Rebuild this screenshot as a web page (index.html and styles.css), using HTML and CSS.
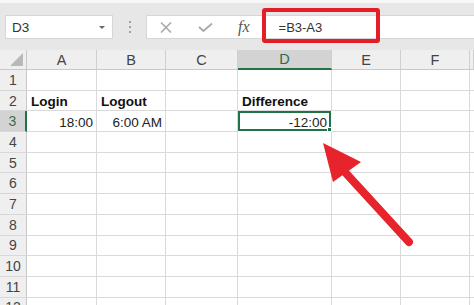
FILE: index.html
```html
<!DOCTYPE html>
<html lang="en">
<head>
    <meta charset="UTF-8">
    <meta name="viewport" content="width=device-width, initial-scale=1.0">
    <title>Time difference</title>
    <link rel="stylesheet" href="styles.css">
</head>
<body>
    <div class="app">
        <div class="toolbar">
            <div class="namebox">
                <span>D3</span>
                <span class="caret"></span>
            </div>
            <div class="grip"><i></i><i></i><i></i></div>
            <div class="fbar">
                <svg class="ico-x" width="14" height="11" viewBox="0 0 14 11"><path d="M2 0.5 L12 10.5 M12 0.5 L2 10.5" stroke="#a9a9a9" stroke-width="1.6" fill="none"/></svg>
                <svg class="ico-ok" width="15" height="9" viewBox="0 0 15 9"><path d="M1 4 L5.5 8 L14 0.5" stroke="#a9a9a9" stroke-width="1.8" fill="none"/></svg>
                <span class="fx">fx</span>
                <span class="formula">=B3-A3</span>
            </div>
        </div>

        <div class="sheet">
            <div class="row head">
                <div class="rh corner"><span class="tri"></span></div>
                <div class="c a">A</div><div class="c b">B</div><div class="c cc">C</div>
                <div class="c d on">D</div><div class="c e">E</div><div class="c f">F</div><div class="c g"></div>
            </div>
            <div class="row">
                <div class="rh">1</div>
                <div class="c a"></div><div class="c b"></div><div class="c cc"></div>
                <div class="c d"></div><div class="c e"></div><div class="c f"></div><div class="c g"></div>
            </div>
            <div class="row">
                <div class="rh">2</div>
                <div class="c a bold">Login</div><div class="c b bold">Logout</div><div class="c cc"></div>
                <div class="c d bold">Difference</div><div class="c e"></div><div class="c f"></div><div class="c g"></div>
            </div>
            <div class="row">
                <div class="rh on">3</div>
                <div class="c a num">18:00</div><div class="c b num">6:00 AM</div><div class="c cc"></div>
                <div class="c d num sel">-12:00</div><div class="c e"></div><div class="c f"></div><div class="c g"></div>
            </div>
            <div class="row">
                <div class="rh">4</div>
                <div class="c a"></div><div class="c b"></div><div class="c cc"></div>
                <div class="c d"></div><div class="c e"></div><div class="c f"></div><div class="c g"></div>
            </div>
            <div class="row">
                <div class="rh">5</div>
                <div class="c a"></div><div class="c b"></div><div class="c cc"></div>
                <div class="c d"></div><div class="c e"></div><div class="c f"></div><div class="c g"></div>
            </div>
            <div class="row">
                <div class="rh">6</div>
                <div class="c a"></div><div class="c b"></div><div class="c cc"></div>
                <div class="c d"></div><div class="c e"></div><div class="c f"></div><div class="c g"></div>
            </div>
            <div class="row">
                <div class="rh">7</div>
                <div class="c a"></div><div class="c b"></div><div class="c cc"></div>
                <div class="c d"></div><div class="c e"></div><div class="c f"></div><div class="c g"></div>
            </div>
            <div class="row">
                <div class="rh">8</div>
                <div class="c a"></div><div class="c b"></div><div class="c cc"></div>
                <div class="c d"></div><div class="c e"></div><div class="c f"></div><div class="c g"></div>
            </div>
            <div class="row">
                <div class="rh">9</div>
                <div class="c a"></div><div class="c b"></div><div class="c cc"></div>
                <div class="c d"></div><div class="c e"></div><div class="c f"></div><div class="c g"></div>
            </div>
            <div class="row">
                <div class="rh">10</div>
                <div class="c a"></div><div class="c b"></div><div class="c cc"></div>
                <div class="c d"></div><div class="c e"></div><div class="c f"></div><div class="c g"></div>
            </div>
            <div class="row">
                <div class="rh">11</div>
                <div class="c a"></div><div class="c b"></div><div class="c cc"></div>
                <div class="c d"></div><div class="c e"></div><div class="c f"></div><div class="c g"></div>
            </div>
            <div class="row">
                <div class="rh">12</div>
                <div class="c a"></div><div class="c b"></div><div class="c cc"></div>
                <div class="c d"></div><div class="c e"></div><div class="c f"></div><div class="c g"></div>
            </div>
        </div>

        <!-- annotations -->
        <div class="highlight"></div>
        <svg class="arrow" width="474" height="305" viewBox="0 0 474 305">
            <line x1="409" y1="242" x2="343" y2="170" stroke="#e7232b" stroke-width="8" stroke-linecap="round"/>
            <polygon points="323,143 333,182 361,162" fill="#e7232b"/>
        </svg>
    </div>
</body>
</html>
```

FILE: styles.css
```css
body {
    margin: 0;
    background-color: #fff;
    font-family: "Liberation Sans", Arial, sans-serif;
    color: #222;
}
.app {
    position: relative;
    width: 474px;
    height: 305px;
    overflow: hidden;
}

/* formula bar */
.toolbar {
    display: flex;
    height: 50px;
    box-sizing: border-box;
    padding-top: 15px;
    background-color: #e7e7e7;
    border-top: 3px solid #f7f7f7;
    padding-top: 12px;
}
.namebox {
    display: flex;
    align-items: center;
    justify-content: space-between;
    width: 108px;
    height: 24px;
    margin-left: 5px;
    padding: 0 7px 0 6px;
    box-sizing: border-box;
    background-color: #fff;
    border: 1px solid #d6d6d6;
    font-size: 13.5px;
    color: #333;
}
.caret {
    width: 0;
    height: 0;
    border-left: 3px solid transparent;
    border-right: 3px solid transparent;
    border-top: 3px solid #666;
}
.grip {
    display: flex;
    flex-direction: column;
    align-items: center;
    justify-content: center;
    gap: 3px;
    width: 33px;
    height: 24px;
}
.grip i {
    width: 2px;
    height: 2px;
    background-color: #a0a0a0;
}
.fbar {
    display: flex;
    align-items: center;
    flex: 1;
    height: 24px;
    box-sizing: border-box;
    padding-left: 12px;
    background-color: #fff;
    border: 1px solid #d6d6d6;
    border-right: none;
}
.ico-ok {
    margin-left: 25px;
}
.fx {
    margin-left: 25px;
    font-family: "Liberation Serif", serif;
    font-style: italic;
    font-size: 16px;
    color: #555;
}
.formula {
    margin-left: 29px;
    font-size: 13px;
    color: #333;
}

/* grid */
.row {
    display: flex;
    height: 20.7px;
}
.row.head {
    height: 20px;
    background-color: #efefef;
}
.rh {
    width: 27px;
    flex: none;
    box-sizing: border-box;
    display: flex;
    align-items: center;
    justify-content: center;
    background-color: #efefef;
    border-right: 1px solid #c8c8c8;
    border-bottom: 1px solid #d8d8d8;
    font-size: 14px;
    color: #444;
}
.rh.on {
    background-color: #d3d3d3;
    color: #3b6e4f;
    border-right: 2px solid #217346;
}
.corner {
    position: relative;
    border-bottom: 1px solid #c8c8c8;
}
.tri {
    position: absolute;
    right: 3px;
    bottom: 3px;
    width: 0;
    height: 0;
    border-left: 13px solid transparent;
    border-bottom: 13px solid #b8b8b8;
}
.c {
    flex: none;
    box-sizing: border-box;
    display: flex;
    align-items: flex-end;
    padding: 0 3px 0 4px;
    border-right: 1px solid #dadada;
    border-bottom: 1px solid #dadada;
    font-size: 13.5px;
    line-height: 16px;
    white-space: nowrap;
    overflow: hidden;
}
.head .c {
    align-items: center;
    justify-content: center;
    padding: 0;
    font-size: 14.5px;
    color: #444;
    border-right-color: #cfcfcf;
    border-bottom-color: #c8c8c8;
}
.head .c.on {
    background-color: #d3d3d3;
    color: #2f6b45;
    border-bottom: 2px solid #217346;
}
.a { width: 70px; }
.b { width: 69px; }
.cc { width: 72px; }
.d { width: 94px; }
.e { width: 69px; }
.f { width: 69px; }
.g { flex: 1; }
.bold {
    font-weight: bold;
    color: #111;
}
.num {
    justify-content: flex-end;
    padding-right: 3px;
}
.sel {
    position: relative;
    box-shadow: inset 0 0 0 2px #217346;
    border-color: transparent;
    padding-right: 4px;
}
.sel::after {
    content: "";
    position: absolute;
    right: -3px;
    bottom: -3px;
    width: 5px;
    height: 5px;
    background-color: #217346;
    border: 1px solid #fff;
}

/* annotations */
.highlight {
    position: absolute;
    left: 262px;
    top: 8px;
    width: 118px;
    height: 35px;
    box-sizing: border-box;
    border: 4px solid #e31e26;
    border-radius: 3px;
}
.arrow {
    position: absolute;
    left: 0;
    top: 0;
}
```
